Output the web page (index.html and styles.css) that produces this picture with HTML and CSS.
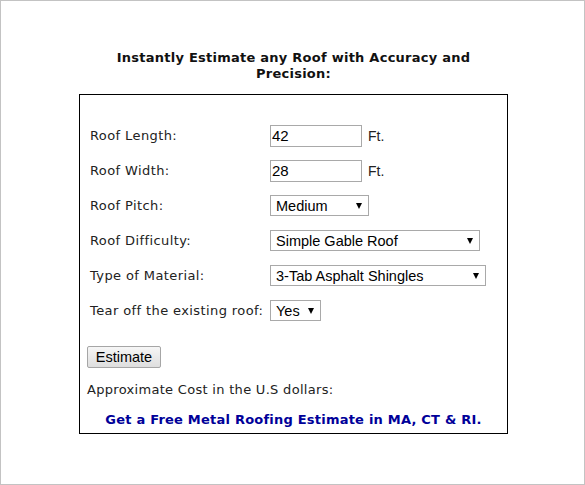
FILE: index.html
```html
<!DOCTYPE html>
<html lang="en">
<head>
    <meta charset="UTF-8">
    <meta name="viewport" content="width=device-width, initial-scale=1.0">
    <title>Roof Estimate</title>
    <link rel="stylesheet" href="styles.css">
</head>
<body>
    <div class="page">
        <h1 class="title">Instantly Estimate any Roof with Accuracy and Precision:</h1>

        <form class="calc">
            <div class="rows">
                <label>Roof Length:</label>
                <div><input class="num" type="text" value="42"><span class="unit">Ft.</span></div>

                <label>Roof Width:</label>
                <div><input class="num" type="text" value="28"><span class="unit">Ft.</span></div>

                <label>Roof Pitch:</label>
                <div><span class="pick"><select class="w-pitch"><option>Medium</option></select></span></div>

                <label>Roof Difficulty:</label>
                <div><span class="pick"><select class="w-diff"><option>Simple Gable Roof</option></select></span></div>

                <label>Type of Material:</label>
                <div><span class="pick"><select class="w-mat"><option>3-Tab Asphalt Shingles</option></select></span></div>

                <label>Tear off the existing roof:</label>
                <div><span class="pick"><select class="w-tear"><option>Yes</option></select></span></div>
            </div>

            <button type="button" class="btn">Estimate</button>
            <p class="cost">Approximate Cost in the U.S dollars:</p>
            <p class="promo"><a href="#">Get a Free Metal Roofing Estimate in MA, CT &amp; RI.</a></p>
        </form>
    </div>
</body>
</html>
```

FILE: styles.css
```css
body {
    margin: 0;
    font-family: "DejaVu Sans", Verdana, sans-serif;
    font-size: 13px;
    color: #222;
}

.page {
    box-sizing: border-box;
    height: 485px;
    border: 1px solid #c3c3c3;
    padding: 49px 0 0 2px;
}

.title {
    width: 420px;
    margin: 0 auto 12px;
    font-size: 13px;
    line-height: 16px;
    font-weight: bold;
    letter-spacing: 0.25px;
    text-align: center;
    color: #111;
}

.calc {
    box-sizing: border-box;
    width: 429px;
    margin: 0 auto;
    border: 1px solid #000;
    padding: 23px 7px 5px;
}

.rows {
    display: grid;
    grid-template-columns: 180px auto;
    grid-auto-rows: 35px;
    align-items: center;
    padding-left: 3px;
}

.rows label {
    letter-spacing: 0.4px;
}

.num {
    box-sizing: border-box;
    width: 92px;
    height: 22px;
    padding: 0 1px;
    border: 1px solid #a9a9a9;
    font-family: "Liberation Sans", Arial, sans-serif;
    font-size: 15px;
    color: #000;
    vertical-align: middle;
}

.unit {
    margin-left: 6px;
    font-family: "Liberation Sans", Arial, sans-serif;
    font-size: 14px;
    vertical-align: middle;
}

.pick {
    position: relative;
    display: inline-block;
    vertical-align: middle;
}

.pick select {
    box-sizing: border-box;
    height: 21px;
    padding: 0 0 0 5px;
    border: 1px solid #a9a9a9;
    border-radius: 0;
    background: #fff;
    -webkit-appearance: none;
    appearance: none;
    font-family: "Liberation Sans", Arial, sans-serif;
    font-size: 14.5px;
    color: #000;
    display: block;
}

.pick::after { /* little arrow on the right */
    content: "";
    position: absolute;
    right: 7px;
    top: 8px;
    border-left: 3.5px solid transparent;
    border-right: 3.5px solid transparent;
    border-top: 6px solid #000;
    pointer-events: none;
}

.w-pitch { width: 99px; }
.w-diff { width: 210px; }
.w-mat { width: 216px; }
.w-tear { width: 51px; }

.btn {
    display: block;
    box-sizing: border-box;
    width: 74px;
    height: 22px;
    margin-top: 18px;
    padding: 0;
    border: 1px solid #a6a6a6;
    border-radius: 2px;
    background: linear-gradient(#f6f6f6, #dedede);
    font-family: "Liberation Sans", Arial, sans-serif;
    font-size: 14.5px;
    color: #000;
}

.cost {
    margin: 14px 0 0;
    line-height: 16px;
    letter-spacing: 0.3px;
}

.promo {
    margin: 14px 0 0;
    line-height: 16px;
    text-align: center;
}

.promo a {
    color: #000099;
    font-weight: bold;
    letter-spacing: 0.22px;
    text-decoration: none;
}
```
